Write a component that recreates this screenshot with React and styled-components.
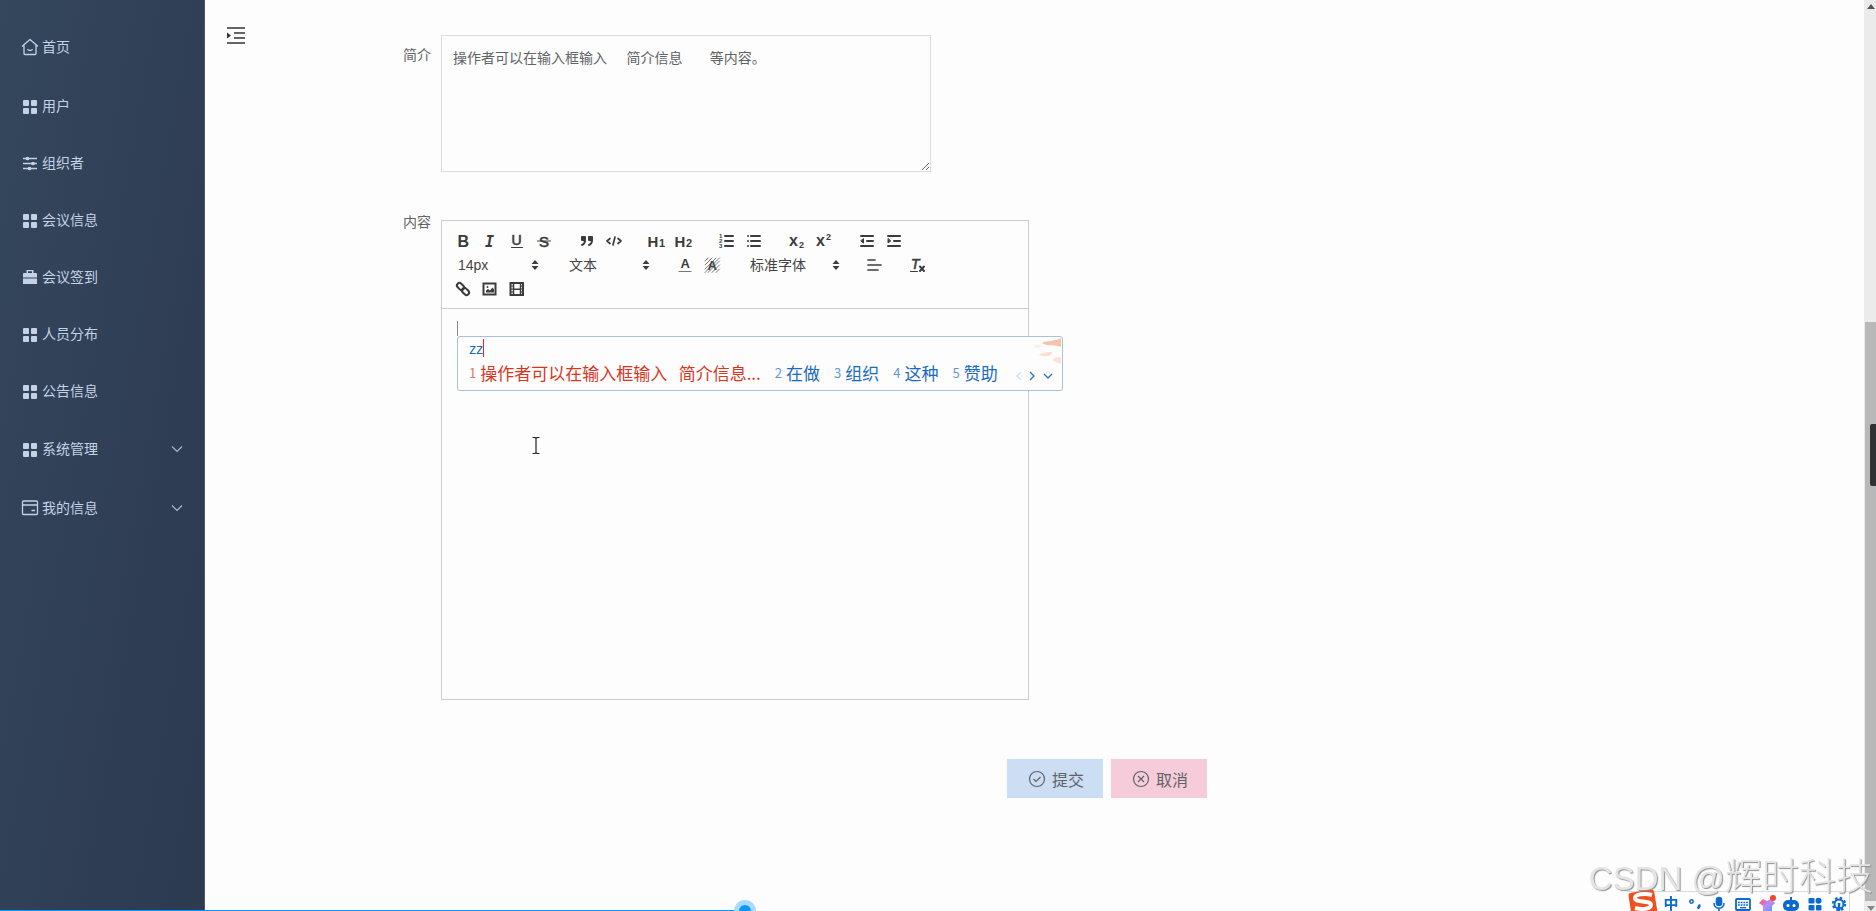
import React, { useState } from "react";
import styled, { createGlobalStyle } from "styled-components";

const GlobalStyle = createGlobalStyle`
  *, *::after {
    box-sizing: border-box;
  }
  body {
    margin: 0;
    background: #fdfdfd;
    color: #606266;
    font-family: "Liberation Sans", "Noto Sans CJK SC", sans-serif;
    font-size: 14px;
  }
  button, textarea, select {
    font-family: inherit;
    font-size: inherit;
    color: inherit;
  }
`;

const Page = styled.div`
  display: flex;
  min-height: 100vh;
`;

const Sidebar = styled.nav`
  flex: 0 0 205px;
  padding-top: 17px;
  background: linear-gradient(100deg, #35475d 0%, #2e3d54 70%, #2d3b51 100%);
  border-right: 1px solid #50565e;
`;

const MenuItem = styled.a`
  display: flex;
  align-items: center;
  gap: 3px;
  height: ${props => props.$height || 57}px;
  padding: 0 21px;
  color: #c3d2e6;
  line-height: 20px;
  text-decoration: none;

  svg {
    flex: none;
  }
`;

const MenuText = styled.span`
  flex: 1;
`;

const Main = styled.main`
  flex: 1;
  display: flex;
  min-width: 0;
`;

const FoldColumn = styled.div`
  flex: 0 0 145px;
  padding: 27px 0 0 21px;
`;

const FoldButton = styled.button`
  display: block;
  padding: 0;
  border: 0;
  background: none;
  color: #333;

  svg {
    display: block;
  }
`;

const Form = styled.form`
  flex: 1;
  min-width: 0;
  padding: 35px 0 40px;
`;

const FormRow = styled.div`
  display: flex;
  align-items: flex-start;
  gap: 10px;
  margin-bottom: 40px;
`;

const Label = styled.label`
  width: 81px;
  padding-top: ${props => (props.$inset ? 10 : 0)}px;
  line-height: 20px;
  text-align: right;
`;

const IntroInput = styled.textarea`
  display: block;
  width: 490px;
  height: 137px;
  padding: 12px 11px;
  border: 1px solid #dcdcdc;
  outline: 0;
  background: transparent;
  line-height: 20px;
  resize: vertical;
`;

const Editor = styled.div`
  position: relative;
  width: 588px;
  margin-top: 8px;
  border: 1px solid #ccc;
`;

const Toolbar = styled.div`
  padding: 8px 7px 7px;
  border-bottom: 1px solid #ccc;
  color: #444;
`;

const ToolRow = styled.div`
  display: flex;
  gap: 16px;
  height: 24px;
`;

const ToolGroup = styled.div`
  display: flex;
`;

const ToolButton = styled.button`
  display: flex;
  align-items: center;
  justify-content: center;
  width: 27px;
  height: 24px;
  padding: 0;
  border: 0;
  background: none;
`;

const Glyph = styled.svg`
  width: 18px;
  height: 18px;
  fill: none;
  stroke: #3c3c3c;
  stroke-width: 2;
  stroke-linecap: round;
  stroke-linejoin: round;

  text {
    fill: #3c3c3c;
    stroke: none;
    font-family: "Liberation Sans", sans-serif;
    font-weight: bold;
  }
`;

const Picker = styled.div`
  position: relative;
  width: ${props => props.$width}px;

  svg {
    position: absolute;
    top: 7px;
    right: 5px;
    pointer-events: none;
  }
`;

const PickerSelect = styled.select`
  appearance: none;
  width: 100%;
  height: 24px;
  padding: 0 20px 0 9px;
  border: 0;
  background: none;
`;

const ContentInput = styled.textarea`
  display: block;
  width: 100%;
  height: 390px;
  padding: 12px 15px;
  border: 0;
  outline: 0;
  background: transparent;
  resize: none;
`;

const Caret = styled.i`
  position: absolute;
  top: 100px;
  left: 15px;
  width: 1px;
  height: 15px;
  background: #888;
`;

const Pointer = styled.svg`
  position: absolute;
  top: 215px;
  left: 89px;
`;

const Ime = styled.div`
  position: absolute;
  top: 115px;
  left: 15px;
  width: 606px;
  height: 55px;
  padding: 1px 11px;
  border: 1px solid #a9c3d6;
  border-radius: 3px;
  background: #fdfdfd;
  color: #1a6bc0;
  font-family: "Noto Sans CJK SC", sans-serif;
`;

const Typed = styled.div`
  display: flex;
  align-items: center;
  height: 20px;
  font-family: "Noto Sans", sans-serif;
  font-size: 15px;

  &::after {
    content: "";
    width: 1px;
    height: 18px;
    background: #d03020;
  }
`;

const Candidates = styled.ol`
  display: flex;
  align-items: center;
  gap: 14px;
  height: 30px;
  margin: 0;
  padding: 0;
  list-style: none;
  white-space: pre;
`;

const Candidate = styled.li`
  display: flex;
  align-items: center;
  gap: 4px;
  color: ${props => (props.$active ? "#d8351f" : "#1a6bc0")};
  font-size: 17px;
  line-height: 24px;

  span {
    font-size: 13px;
    opacity: 0.7;
  }
`;

const Paging = styled.svg`
  position: absolute;
  right: 6px;
  bottom: 8px;
`;

const Petals = styled.svg`
  position: absolute;
  top: 0;
  right: 0;
`;

const Actions = styled.div`
  display: flex;
  justify-content: center;
  gap: 8px;
  margin-top: 59px;
`;

const ActionButton = styled.button`
  display: flex;
  align-items: center;
  justify-content: center;
  gap: 6px;
  width: 96px;
  height: 39px;
  padding: 0 0 0 2px;
  border: 0;
  background: ${props => props.$color};
  font-size: 16px;
`;

const Scrollbar = styled.div`
  position: relative;
  flex: 0 0 12px;
  display: flex;
  flex-direction: column;
  align-items: center;
  justify-content: space-between;
  padding: 4px 0 0 1px;
  background: #ebebeb;
`;

const Thumb = styled.div`
  width: 100%;
  height: 579px;
  margin: auto 0 5px;
  background: #b8b8b8;
`;

const SideHandle = styled.div`
  position: absolute;
  top: 424px;
  right: 0;
  width: 6px;
  height: 62px;
  border-radius: 2px 0 0 2px;
  background: #303133;
`;

const Progress = styled.div`
  position: fixed;
  bottom: 0;
  left: 0;
  height: 1px;
  background: #0a96ff;

  &::after {
    content: "";
    position: absolute;
    top: -10px;
    right: -11px;
    width: 22px;
    height: 22px;
    border: 5px solid #a9d9fe;
    border-radius: 50%;
    background: #0a96ff;
  }
`;

const ImeBar = styled.div`
  position: fixed;
  right: 26px;
  bottom: 0;
  display: flex;
  align-items: center;
  gap: 6px;
  height: 20px;
  padding: 4px 1px 0 35px;
  border-top: 1px solid #d3dde6;
  border-right: 1px solid #d3dde6;
  background: #fdfdfd;
  color: #0b69cf;
`;

const ImeButton = styled.button`
  display: flex;
  align-items: center;
  justify-content: center;
  width: 18px;
  height: 16px;
  padding: 0;
  border: 0;
  background: none;
  font-size: 15px;
  font-weight: bold;
  line-height: 16px;

  svg {
    flex: none;
  }
`;

const ImeLogo = styled.svg`
  position: absolute;
  left: 0;
  bottom: -9px;
`;

const Watermark = styled.div`
  position: fixed;
  right: 3px;
  bottom: 6px;
  color: #e4e4e4;
  font-size: 37px;
  font-weight: 300;
  line-height: 52px;
  text-shadow: 1px 1px 1px #8f8f8f;
  white-space: nowrap;
`;

const WatermarkLatin = styled.span`
  font-size: 33px;
`;

const HomeIcon = () => (
  <svg width="18" height="18" viewBox="0 0 18 18" fill="none" stroke="currentColor" strokeWidth="1.3" strokeLinejoin="round" strokeLinecap="round">
    <path d="M1.5 8 9 1.5 16.5 8M3 7v8.5a1 1 0 0 0 1 1h10a1 1 0 0 0 1-1V7" />
    <path d="M6.8 11.6c1 1.2 3.4 1.2 4.4 0" />
  </svg>
);

const GridIcon = () => (
  <svg width="18" height="18" viewBox="0 0 18 18" fill="currentColor">
    <rect x="2" y="3" width="6" height="6" rx="1" />
    <rect x="10" y="3" width="6" height="6" rx="1" />
    <rect x="2" y="11" width="6" height="6" rx="1" />
    <rect x="10" y="11" width="6" height="6" rx="1" />
  </svg>
);

const SliderIcon = () => (
  <svg width="18" height="18" viewBox="0 0 18 18" stroke="currentColor" strokeWidth="1.3" fill="currentColor">
    <path d="M2 4.5h14M2 9.5h14M2 14.5h14" />
    <circle cx="6.5" cy="4.5" r="1.2" />
    <circle cx="12" cy="9.5" r="1.2" />
    <circle cx="8.5" cy="14.5" r="1.2" />
  </svg>
);

const CaseIcon = () => (
  <svg width="18" height="18" viewBox="0 0 18 18" fill="currentColor">
    <path d="M5.5 5V2h7v3H15a1 1 0 0 1 1 1v3.5H2V6a1 1 0 0 1 1-1zM7 5h4V3.3H7z" fillRule="evenodd" />
    <path d="M2 10.5h14V16H2z" />
  </svg>
);

const CardIcon = () => (
  <svg width="18" height="18" viewBox="0 0 18 18" fill="none" stroke="currentColor" strokeWidth="1.3">
    <rect x="1.5" y="2" width="15" height="13.5" rx="1" />
    <path d="M1.5 6h15M10.5 11.5h3.5" />
  </svg>
);

const ChevronIcon = () => (
  <svg width="12" height="8" viewBox="0 0 12 8" fill="none" stroke="#a9b6c8" strokeWidth="1.2">
    <path d="m1 1.5 5 5 5-5" />
  </svg>
);

const menu = [
  { text: "首页", icon: HomeIcon, height: 60 },
  { text: "用户", icon: GridIcon },
  { text: "组织者", icon: SliderIcon },
  { text: "会议信息", icon: GridIcon },
  { text: "会议签到", icon: CaseIcon },
  { text: "人员分布", icon: GridIcon },
  { text: "公告信息", icon: GridIcon },
  { text: "系统管理", icon: GridIcon, height: 59, nested: true },
  { text: "我的信息", icon: CardIcon, height: 59, nested: true }
];

const glyphs = {
  bold: <text x="3.5" y="15" fontSize="16">B</text>,
  italic: (
    <text x="4" y="14.5" fontSize="15" fontStyle="italic" style={{ fontFamily: "DejaVu Sans Mono" }}>I</text>
  ),
  underline: (
    <>
      <text x="3.5" y="13" fontSize="14" style={{ fontWeight: 400, stroke: "#3c3c3c", strokeWidth: 0.6 }}>U</text>
      <path d="M3.5 15.5h11" strokeWidth="1.2" />
    </>
  ),
  strike: (
    <>
      <text x="4" y="14.5" fontSize="15" style={{ fontWeight: 400, stroke: "#3c3c3c", strokeWidth: 0.6 }}>S</text>
      <path d="M2.5 9h13" strokeWidth="1" />
    </>
  ),
  quote: (
    <>
      <path d="M4 5h3v3H4zM11 5h3v3h-3z" fill="#3c3c3c" />
      <path d="M7 8c0 4-3 5-3 5M14 8c0 4-3 5-3 5" />
    </>
  ),
  code: <path d="m5 6.5-3 2.5 3 2.5M13 6.5l3 2.5-3 2.5M10 5 8 13" strokeWidth="1.7" />,
  h1: (
    <>
      <text x="-0.5" y="14.5" fontSize="15">H</text>
      <text x="11" y="14.5" fontSize="11">1</text>
    </>
  ),
  h2: (
    <>
      <text x="-0.5" y="14.5" fontSize="15">H</text>
      <text x="11" y="14.5" fontSize="11">2</text>
    </>
  ),
  ordered: (
    <>
      <path d="M7 4h8M7 9h8M7 14h8" />
      <text x="1" y="6" fontSize="6">1</text>
      <text x="1" y="11" fontSize="6">2</text>
      <text x="1" y="16" fontSize="6">3</text>
    </>
  ),
  bullet: <path d="M6 4h9M6 9h9M6 14h9M3 4h0M3 9h0M3 14h0" />,
  sub: (
    <>
      <text x="1" y="13.5" fontSize="16">x</text>
      <text x="11" y="16" fontSize="9">2</text>
    </>
  ),
  sup: (
    <>
      <text x="1" y="13.5" fontSize="16">x</text>
      <text x="11" y="8" fontSize="9">2</text>
    </>
  ),
  outdent: (
    <>
      <path d="M3 4h12M9 9h6M3 14h12" />
      <path d="M5.5 7v4L3 9z" fill="#3c3c3c" strokeWidth="1" />
    </>
  ),
  indent: (
    <>
      <path d="M3 4h12M9 9h6M3 14h12" />
      <path d="M3 7v4l2.500-2z" fill="#3c3c3c" strokeWidth="1" />
    </>
  ),
  color: (
    <>
      <text x="4.500" y="11.500" fontSize="13">A</text>
      <path d="M3 15.500h12" strokeWidth="1.200" stroke="#777" />
    </>
  ),
  background: (
    <>
      <path d="M2 5l3-3M2 9l7-7M2 13l11-11M2 16.500 16.500 2M5 16.500 16.500 5M9 16.500 16.500 9M13 16.500l3.500-3.500" strokeWidth="1" stroke="#777" />
      <text x="4.500" y="14" fontSize="13">A</text>
    </>
  ),
  align: <path d="M2 4h7M2 9h13M2 14h10" strokeWidth="1.700" />,
  clean: (
    <>
      <text x="2" y="12.500" fontSize="14" fontStyle="italic" style={{ fontWeight: 400, stroke: "#3c3c3c", strokeWidth: 0.6 }}>T</text>
      <path d="M1.500 15.500h7" strokeWidth="1" />
      <path d="m11 10.500 4 4.500M15 10.500l-4 4.500" />
    </>
  ),
  link: (
    <g transform="rotate(45 9 9)">
      <rect x="1.500" y="6.500" width="8" height="5" rx="2.500" />
      <rect x="8.500" y="6.500" width="8" height="5" rx="2.500" />
    </g>
  ),
  image: (
    <>
      <rect x="2.500" y="3.500" width="12" height="11" strokeLinejoin="miter" />
      <path d="M5 12.500v-2l2-1.500 2 1.500 2.500-3 1.500 2v3z" fill="#3c3c3c" stroke="none" />
      <circle cx="6.500" cy="7" r="1" fill="#3c3c3c" stroke="none" />
    </>
  ),
  video: (
    <>
      <rect x="2.500" y="3" width="12.500" height="12" strokeLinejoin="miter" />
      <path d="M5.500 3v12M12.500 3v12M6 9.200h6" strokeWidth="1.500" />
      <path d="M3 6h2M3 9h2M3 12h2M13 6h2M13 9h2M13 12h2" strokeWidth="1" />
    </>
  )
};

const firstRow = [
  ["bold", "italic", "underline", "strike"],
  ["quote", "code"],
  ["h1", "h2"],
  ["ordered", "bullet"],
  ["sub", "sup"],
  ["outdent", "indent"]
];

const ToolButtons = ({ names }) => (
  <ToolGroup>
    {names.map(name => (
      <ToolButton key={name} type="button" aria-label={name}>
        <Glyph viewBox="0 0 18 18">{glyphs[name]}</Glyph>
      </ToolButton>
    ))}
  </ToolGroup>
);

const ToolPicker = ({ label, value, width }) => (
  <Picker $width={width}>
    <PickerSelect aria-label={label} defaultValue={value}>
      <option>{value}</option>
    </PickerSelect>
    <svg width="8" height="10" viewBox="0 0 8 10" fill="#3c3c3c">
      <path d="M4 0 7.5 4h-7zM4 10 .5 6h7z" />
    </svg>
  </Picker>
);

const candidates = ["操作者可以在输入框输入   简介信息...", "在做", "组织", "这种", "赞助"];

const ImePopup = () => (
  <Ime>
    <Petals width="36" height="30" viewBox="0 0 36 30">
      <path d="M16 6c5-3 12-1 19-5v9c-5-3-12 0-19-4z" fill="#f6c3a8" />
      <path d="M13 18c4-3 8-3 13-3 1 4-7 6-13 3z" fill="#fbe0d6" />
      <path d="M26 24c2-4 5-4 9-4v7c-3 0-4-3-9-3z" fill="#fce4de" />
      <path d="M8 9c3-2 6-1 8 0-2 2-6 2-8 0z" fill="#fdeee8" />
    </Petals>
    <Typed>zz</Typed>
    <Candidates>
      {candidates.map((text, i) => (
        <Candidate key={text} $active={i === 0}>
          <span>{i + 1}</span>
          {text}
        </Candidate>
      ))}
    </Candidates>
    <Paging width="40" height="12" viewBox="0 0 40 12" fill="none" stroke="#2c70b8" strokeWidth="1.3">
      <path d="M5 2 1 6l4 4" stroke="#cfdeee" />
      <path d="m14 2 4 4-4 4M28 4l4 4 4-4" />
    </Paging>
  </Ime>
);

const InputBar = () => (
  <ImeBar>
    <ImeLogo width="32" height="32" viewBox="0 0 32 32">
      <rect x="3" y="3" width="26" height="27" rx="3" fill="#f0501e" transform="rotate(-9 16 16)" />
      <path d="M25 7c-7-2-17-1-17 3 0 5 16 2 16 7 0 4-9 5-16 3" fill="none" stroke="#fff" strokeWidth="4" />
    </ImeLogo>
    <ImeButton type="button">中</ImeButton>
    <ImeButton type="button" aria-label="标点">
      <svg width="14" height="14" viewBox="0 0 14 14" fill="none" stroke="currentColor" strokeWidth="1.5">
        <circle cx="3.5" cy="4.5" r="1.7" />
        <path d="M11 7.5c1 2 0 3-1.5 4" strokeWidth="2.5" />
      </svg>
    </ImeButton>
    <ImeButton type="button" aria-label="语音">
      <svg width="14" height="16" viewBox="0 0 14 16" fill="none" stroke="currentColor" strokeWidth="1.6">
        <rect x="4.5" y="1.5" width="5" height="8" rx="2.5" fill="currentColor" />
        <path d="M2 7c0 7 10 7 10 0M7 12v3" />
      </svg>
    </ImeButton>
    <ImeButton type="button" aria-label="键盘">
      <svg width="16" height="14" viewBox="0 0 16 14" fill="none" stroke="currentColor">
        <rect x="1" y="2" width="14" height="11" rx="1" strokeWidth="1.8" />
        <path d="M3 5.5h10M3 8h10" strokeWidth="1.5" strokeDasharray="1.8 0.900" />
        <path d="M5 10.7h6" strokeWidth="1.4" />
      </svg>
    </ImeButton>
    <ImeButton type="button" aria-label="皮肤">
      <svg width="18" height="18" viewBox="0 0 18 18">
        <defs>
          <linearGradient id="shirt" x1="0" y1="0" x2="1" y2="1">
            <stop offset="0" stopColor="#ff5a5a" />
            <stop offset="0.5" stopColor="#b98aff" />
            <stop offset="1" stopColor="#38a0ff" />
          </linearGradient>
        </defs>
        <path d="m5 4 4 2 4-2 4 4-3 3v6H5v-6L1 8z" fill="url(#shirt)" />
        <circle cx="15" cy="3" r="3" fill="#f0452e" />
      </svg>
    </ImeButton>
    <ImeButton type="button" aria-label="助手">
      <svg width="16" height="16" viewBox="0 0 16 16">
        <rect x="0" y="4" width="16" height="11" rx="5" fill="currentColor" />
        <path d="M8 1v4" stroke="currentColor" strokeWidth="2" />
        <circle cx="5" cy="9.5" r="1.500" fill="#fff" />
        <circle cx="11" cy="9.5" r="1.500" fill="#fff" />
      </svg>
    </ImeButton>
    <ImeButton type="button" aria-label="工具">
      <svg width="14" height="14" viewBox="0 0 14 14" fill="currentColor">
        <rect x="0.5" y="1" width="6" height="5.500" rx="1" />
        <circle cx="10.500" cy="3.700" r="3" />
        <rect x="0.5" y="8" width="6" height="5.500" rx="1" />
        <rect x="8" y="8" width="5.500" height="5.500" rx="1" />
      </svg>
    </ImeButton>
    <ImeButton type="button" aria-label="设置">
      <svg width="16" height="16" viewBox="0 0 16 16" fill="none" stroke="currentColor">
        <circle cx="8" cy="8" r="4.5" strokeWidth="2" />
        <circle cx="8" cy="8" r="6.200" strokeWidth="2" strokeDasharray="2.500 2.370" />
        <path d="M8 7v8" strokeWidth="2.500" />
      </svg>
    </ImeButton>
  </ImeBar>
);

export default function App() {
  const [intro, setIntro] = useState("操作者可以在输入框输入     简介信息       等内容。");
  const played = 0.397;

  return (
    <Page>
      <GlobalStyle />
      <Sidebar>
        {menu.map(({ text, icon: Icon, height, nested }) => (
          <MenuItem key={text} href="#" $height={height}>
            <Icon />
            <MenuText>{text}</MenuText>
            {nested && <ChevronIcon />}
          </MenuItem>
        ))}
      </Sidebar>
      <Main>
        <FoldColumn>
          <FoldButton type="button" aria-label="展开菜单">
            <svg width="20" height="17" viewBox="0 0 20 17" fill="none" stroke="currentColor" strokeWidth="1.3">
              <path d="M1 1h18M8 6h11M8 11h11M1 16h18" />
              <path d="M1 5.5v6L5 8.5z" fill="currentColor" stroke="none" />
            </svg>
          </FoldButton>
        </FoldColumn>
        <Form onSubmit={e => e.preventDefault()}>
          <FormRow>
            <Label htmlFor="intro" $inset>简介</Label>
            <IntroInput id="intro" value={intro} onChange={e => setIntro(e.target.value)} />
          </FormRow>
          <FormRow>
            <Label htmlFor="content">内容</Label>
            <Editor>
              <Toolbar>
                <ToolRow>
                  {firstRow.map(names => (
                    <ToolButtons key={names[0]} names={names} />
                  ))}
                </ToolRow>
                <ToolRow>
                  <ToolPicker label="字号" value="14px" width={95} />
                  <ToolPicker label="标题" value="文本" width={95} />
                  <ToolButtons names={["color", "background"]} />
                  <ToolPicker label="字体" value="标准字体" width={104} />
                  <ToolButtons names={["align"]} />
                  <ToolButtons names={["clean"]} />
                </ToolRow>
                <ToolRow>
                  <ToolButtons names={["link", "image", "video"]} />
                </ToolRow>
              </Toolbar>
              <ContentInput id="content" />
              <Caret />
              <ImePopup />
              <Pointer width="10" height="19" viewBox="0 0 10 19" fill="none" stroke="#222" strokeWidth="1.2">
                <path d="M1.5 1.5h2.5l1 1 1-1h2.5M5 2.5v14M1.5 17.5h2.5l1-1 1 1h2.5" />
              </Pointer>
            </Editor>
          </FormRow>
          <Actions>
            <ActionButton type="submit" $color="#cbdef4">
              <svg width="18" height="18" viewBox="0 0 18 18" fill="none" stroke="currentColor" strokeWidth="1.2">
                <circle cx="9" cy="9" r="7.5" />
                <path d="m5.5 9 2.5 2.5 4.5-4.5" />
              </svg>
              提交
            </ActionButton>
            <ActionButton type="button" $color="#f7ccda">
              <svg width="18" height="18" viewBox="0 0 18 18" fill="none" stroke="currentColor" strokeWidth="1.2">
                <circle cx="9" cy="9" r="7.5" />
                <path d="m6 6 6 6M12 6l-6 6" />
              </svg>
              取消
            </ActionButton>
          </Actions>
        </Form>
      </Main>
      <Scrollbar>
        <svg width="8" height="5" viewBox="0 0 8 5" fill="#555">
          <path d="M4 0 8 5H0z" />
        </svg>
        <Thumb />
        <svg width="8" height="5" viewBox="0 0 8 5" fill="#888">
          <path d="M4 5 8 0H0z" />
        </svg>
        <SideHandle />
      </Scrollbar>
      <InputBar />
      <Watermark>
        <WatermarkLatin>CSDN @</WatermarkLatin>辉时科技
      </Watermark>
      <Progress style={{ width: `${played * 100}%` }} />
    </Page>
  );
}
